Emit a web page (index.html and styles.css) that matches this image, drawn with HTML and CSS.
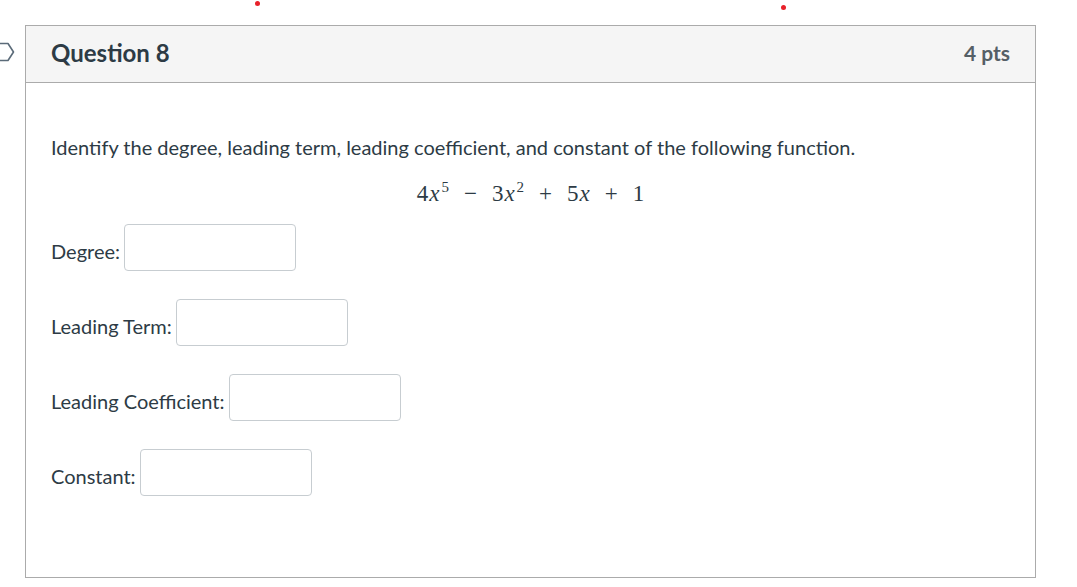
FILE: index.html
```html
<!DOCTYPE html>
<html lang="en">
<head>
<meta charset="utf-8">
<title>Question 8</title>
<link rel="stylesheet" href="styles.css">
</head>
<body>
<span class="dot dot-a"></span>
<span class="dot dot-b"></span>
<svg class="flag" width="16" height="24" viewBox="0 0 16 24" aria-hidden="true">
  <path d="M-6 3.5 H8 L13.5 12 L8 20.5 H-6" fill="none" stroke="#5b6b79" stroke-width="1.6" stroke-linejoin="round"/>
</svg>
<div class="page">
  <section class="question">
    <header class="q-header">
      <h2 class="q-title">Question 8</h2>
      <span class="q-pts">4 pts</span>
    </header>
    <div class="q-body">
      <p class="prompt">Identify the degree, leading term, leading coefficient, and constant of the following function.</p>
      <p class="math"><span class="n">4</span><span class="v">x</span><sup>5</sup><span class="op">−</span><span class="n">3</span><span class="v">x</span><sup>2</sup><span class="op">+</span><span class="n">5</span><span class="v">x</span><span class="op">+</span><span class="n">1</span></p>
      <div class="fields">
        <label class="field"><span class="lbl">Degree:</span><input type="text"></label>
        <label class="field"><span class="lbl">Leading Term:</span><input type="text"></label>
        <label class="field"><span class="lbl">Leading Coefficient:</span><input type="text"></label>
        <label class="field"><span class="lbl">Constant:</span><input type="text"></label>
      </div>
    </div>
  </section>
</div>
</body>
</html>
```

FILE: styles.css
```css
html, body {
  margin: 0;
  padding: 0;
  background: #ffffff;
}
body {
  font-family: Lato, "Open Sans", sans-serif;
  color: #2d3b45;
  position: relative;
  width: 1077px;
  height: 587px;
  overflow: hidden;
}
.dot {
  position: absolute;
  width: 5px;
  height: 5px;
  border-radius: 50%;
  background: #e8212a;
}
.dot-a { left: 255px; top: 1px; }
.dot-b { left: 781px; top: 5px; }
.flag {
  position: absolute;
  left: 0;
  top: 40px;
}
.page {
  padding: 25px 0 0 25px;
}
.question {
  width: 1009px;
  height: 551px;
  border: 1px solid #ababab;
  display: flex;
  flex-direction: column;
}
.q-header {
  height: 57px;
  box-sizing: border-box;
  background: #f5f5f5;
  border-bottom: 1px solid #ababab;
  display: flex;
  align-items: center;
  justify-content: space-between;
  padding: 0 25px 4px 25px;
}
.q-title {
  margin: 0;
  font-size: 24px;
  font-weight: 700;
  color: #2d3b45;
}
.q-pts {
  font-size: 21px;
  font-weight: 700;
  color: #555f66;
}
.q-body {
  padding: 50px 25px 0 25px;
}
.prompt {
  margin: 0;
  font-size: 20px;
  line-height: 28px;
}
.math {
  margin: 18px 0 0 0;
  text-align: center;
  font-family: "Liberation Serif", "DejaVu Serif", serif;
  font-size: 23px;
  line-height: 30px;
  color: #2d3b45;
}
.math .v {
  font-style: italic;
  margin-left: 1px;
}
.math sup {
  font-size: 15px;
  vertical-align: 9px;
  line-height: 0;
  margin-left: 2px;
}
.math .op {
  margin: 0 15px;
}
.fields {
  margin-top: 15px;
  display: flex;
  flex-direction: column;
  gap: 28px;
}
.field {
  display: flex;
  align-items: center;
  gap: 4px;
  font-size: 20px;
}
.field .lbl {
  margin-top: 6px;
}
.field input {
  box-sizing: border-box;
  width: 172px;
  height: 47px;
  border: 1px solid #c7cdd1;
  border-radius: 4px;
  margin: 0;
  padding: 0 8px;
  font: inherit;
  background: #fff;
}
```
